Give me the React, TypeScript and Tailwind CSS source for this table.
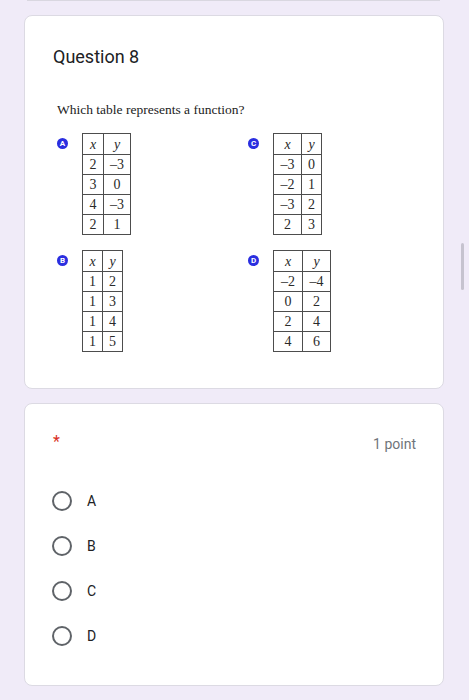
import React from "react";

type TableProps = { cols: [number, number]; rows: [string, string][] };

function MathTable({ cols, rows }: TableProps) {
  const all: [string, string][] = [["x", "y"], ...rows];
  return (
    <div className="flex flex-col border-l border-t border-[#4d4d4d] text-[#2a2a2a] text-[14px]" style={{ width: cols[0] + cols[1] + 1, fontFamily: '"Liberation Serif", "Times New Roman", serif' }}>
      {all.map((r, i) => (
        <div key={i} className={i === 0 ? "flex h-[21px]" : "flex h-[20px]"}>
          <div className={"flex items-center justify-center border-r border-b border-[#4d4d4d] " + (i === 0 ? "italic" : "")} style={{ width: cols[0] }}>
            {r[0]}
          </div>
          <div className={"flex items-center justify-center border-r border-b border-[#4d4d4d] " + (i === 0 ? "italic" : "")} style={{ width: cols[1] }}>
            {r[1]}
          </div>
        </div>
      ))}
    </div>
  );
}

function Badge({ letter }: { letter: string }) {
  return (
    <div className="mt-[5px] flex h-[11px] w-[11px] items-center justify-center rounded-full bg-[#2a2ee0] text-[8px] font-bold leading-none text-white" style={{ fontFamily: "Roboto, Arial, sans-serif" }}>
      {letter}
    </div>
  );
}

function Option({ letter, cols, rows, className }: { letter: string; cols: [number, number]; rows: [string, string][]; className?: string }) {
  return (
    <div className={"flex items-start gap-[14px] " + (className ?? "")}>
      <Badge letter={letter} />
      <MathTable cols={cols} rows={rows} />
    </div>
  );
}

export default function App() {
  const roboto = { fontFamily: "Roboto, Arial, sans-serif" };
  return (
    <div className="relative min-h-[700px] bg-[#f0ebf8] pl-[24px]" style={roboto}>
      <div className="ml-[3px] h-[1px] w-[413px] bg-[#d9d7e0]" />

      <div className="mt-[14px] w-[420px] rounded-[8px] border border-[#dcdae3] bg-white pl-[28px] pt-[29px] pb-[36px]">
        <div className="text-[18px] leading-[24px] text-[#202124]">Question 8</div>
        <div className="ml-[4px] mt-[31px] text-[13.5px] leading-[20px] text-[#222]" style={{ fontFamily: '"Liberation Serif", "Times New Roman", serif' }}>
          Which table represents a function?
        </div>

        <div className="mt-[13px] ml-[4px] flex">
          <Option
            letter="A"
            className="w-[191px]"
            cols={[21, 27]}
            rows={[
              ["2", "–3"],
              ["3", "0"],
              ["4", "–3"],
              ["2", "1"],
            ]}
          />
          <Option
            letter="C"
            cols={[28, 20]}
            rows={[
              ["–3", "0"],
              ["–2", "1"],
              ["–3", "2"],
              ["2", "3"],
            ]}
          />
        </div>

        <div className="mt-[15px] ml-[4px] flex">
          <Option
            letter="B"
            className="w-[191px]"
            cols={[20, 20]}
            rows={[
              ["1", "2"],
              ["1", "3"],
              ["1", "4"],
              ["1", "5"],
            ]}
          />
          <Option
            letter="D"
            cols={[29, 28]}
            rows={[
              ["–2", "–4"],
              ["0", "2"],
              ["2", "4"],
              ["4", "6"],
            ]}
          />
        </div>
      </div>

      <div className="mt-[14px] w-[420px] rounded-[8px] border border-[#dcdae3] bg-white pl-[28px] pr-[27px] pt-[30px] pb-[27px]">
        <div className="flex items-start justify-between">
          <span className="text-[16px] leading-[16px] text-[#d93025]">*</span>
          <span className="text-[14px] leading-[20px] text-[#70757a]">1 point</span>
        </div>
        <div className="mt-[24px] -ml-[1px] flex flex-col">
          {["A", "B", "C", "D"].map((l) => (
            <div key={l} className="flex h-[45px] items-center gap-[15px]">
              <div className="h-[20px] w-[20px] rounded-full border-2 border-[#5f6368]" />
              <span className="text-[14px] leading-[20px] text-[#202124]">{l}</span>
            </div>
          ))}
        </div>
      </div>

      <div className="absolute left-[461px] top-[243px] h-[47px] w-[3px] rounded-full bg-[#c6c3cf]" />
    </div>
  );
}
